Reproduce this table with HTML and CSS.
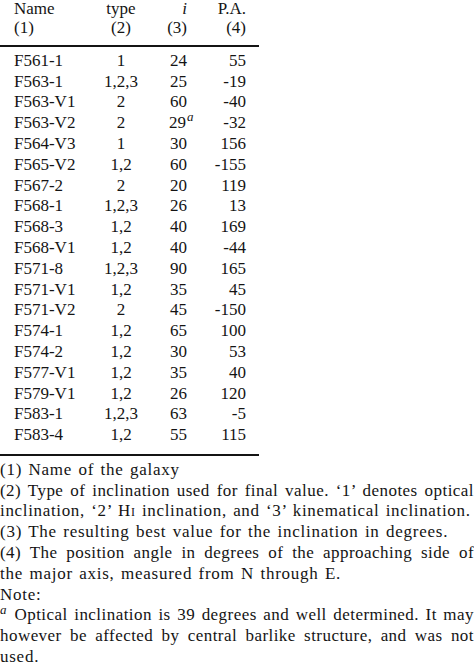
FILE: index.html
```html
<!DOCTYPE html>
<html lang="en">
<head>
<meta charset="utf-8">
<title>Galaxy inclinations</title>
<link rel="stylesheet" href="styles.css">
</head>
<body>
<div class="tbl">
  <div class="head">
    <div class="row hrow"><span>Name</span><span class="c2">type</span><span class="c3"><i>i</i></span><span class="c4">P.A.</span></div>
    <div class="row hrow"><span>(1)</span><span class="c2">(2)</span><span class="c3">(3)</span><span class="c4">(4)</span></div>
  </div>
  <div class="body">
    <div class="row"><span>F561-1</span><span class="c2">1</span><span class="c3">24</span><span class="c4">55</span></div>
    <div class="row"><span>F563-1</span><span class="c2">1,2,3</span><span class="c3">25</span><span class="c4">-19</span></div>
    <div class="row"><span>F563-V1</span><span class="c2">2</span><span class="c3">60</span><span class="c4">-40</span></div>
    <div class="row"><span>F563-V2</span><span class="c2">2</span><span class="c3">29<sup class="fn">a</sup></span><span class="c4">-32</span></div>
    <div class="row"><span>F564-V3</span><span class="c2">1</span><span class="c3">30</span><span class="c4">156</span></div>
    <div class="row"><span>F565-V2</span><span class="c2">1,2</span><span class="c3">60</span><span class="c4">-155</span></div>
    <div class="row"><span>F567-2</span><span class="c2">2</span><span class="c3">20</span><span class="c4">119</span></div>
    <div class="row"><span>F568-1</span><span class="c2">1,2,3</span><span class="c3">26</span><span class="c4">13</span></div>
    <div class="row"><span>F568-3</span><span class="c2">1,2</span><span class="c3">40</span><span class="c4">169</span></div>
    <div class="row"><span>F568-V1</span><span class="c2">1,2</span><span class="c3">40</span><span class="c4">-44</span></div>
    <div class="row"><span>F571-8</span><span class="c2">1,2,3</span><span class="c3">90</span><span class="c4">165</span></div>
    <div class="row"><span>F571-V1</span><span class="c2">1,2</span><span class="c3">35</span><span class="c4">45</span></div>
    <div class="row"><span>F571-V2</span><span class="c2">2</span><span class="c3">45</span><span class="c4">-150</span></div>
    <div class="row"><span>F574-1</span><span class="c2">1,2</span><span class="c3">65</span><span class="c4">100</span></div>
    <div class="row"><span>F574-2</span><span class="c2">1,2</span><span class="c3">30</span><span class="c4">53</span></div>
    <div class="row"><span>F577-V1</span><span class="c2">1,2</span><span class="c3">35</span><span class="c4">40</span></div>
    <div class="row"><span>F579-V1</span><span class="c2">1,2</span><span class="c3">26</span><span class="c4">120</span></div>
    <div class="row"><span>F583-1</span><span class="c2">1,2,3</span><span class="c3">63</span><span class="c4">-5</span></div>
    <div class="row"><span>F583-4</span><span class="c2">1,2</span><span class="c3">55</span><span class="c4">115</span></div>
  </div>
</div>
<div class="notes">
  <span class="ln">(1) Name of the galaxy</span>
  <span class="ln jl">(2) Type of inclination used for final value. ‘1’ denotes optical</span>
  <span class="ln tight">inclination, ‘2’ H<span class="sc">i</span> inclination, and ‘3’ kinematical inclination.</span>
  <span class="ln">(3) The resulting best value for the inclination in degrees.</span>
  <span class="ln jl">(4) The position angle in degrees of the approaching side of</span>
  <span class="ln">the major axis, measured from N through E.</span>
  <span class="ln">Note:</span>
  <span class="ln jl"><sup class="fn2">a</sup> Optical inclination is 39 degrees and well determined. It may</span>
  <span class="ln jl">however be affected by central barlike structure, and was not</span>
  <span class="ln">used.</span>
</div>
</body>
</html>
```

FILE: styles.css
```css
body {
  margin: 0;
  background: #ffffff;
  color: #141414;
  font-family: "Liberation Serif", "Times New Roman", serif;
  font-size: 17px;
  line-height: 20.8px;
}

.tbl {
  width: 259px;
}

.row {
  display: grid;
  grid-template-columns: 70px 74px 29px 59px;
  padding: 0 13px 0 14px;
  white-space: nowrap;
}

.hrow {
  line-height: 18.8px;
}

.c2 { text-align: center; }
.c3, .c4 { text-align: right; }

.head {
  padding-bottom: 7.4px;
  border-bottom: 2px solid #141414;
}

.body {
  padding-top: 3.9px;
  padding-bottom: 8.4px;
  border-bottom: 2px solid #141414;
}

.fn {
  display: inline-block;
  width: 0;
  font-style: italic;
  font-size: 13px;
  line-height: 0;
  vertical-align: 7px;
  text-align: left;
  padding-left: 1px;
}

.notes {
  width: 474px;
  padding-top: 3.4px;
  letter-spacing: 0.75px;
  word-spacing: 1.4px;
  white-space: nowrap;
}

.ln {
  display: block;
  text-align: left;
}

.jl {
  letter-spacing: 0.45px;
  word-spacing: 0;
  text-align: justify;
  text-align-last: justify;
}

.tight {
  letter-spacing: 0.66px;
  word-spacing: 1.4px;
}

.sc {
  font-variant: small-caps;
}

.fn2 {
  font-style: italic;
  font-size: 13px;
  line-height: 0;
  vertical-align: 6px;
  margin-right: 1px;
}
```
